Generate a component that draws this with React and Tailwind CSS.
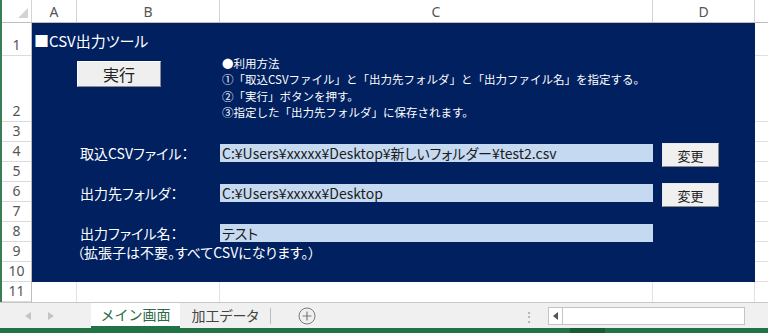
const jp = "font-['Noto_Sans_CJK_JP',sans-serif]"

const cols = [
  { name: 'A', w: 'w-[45px]' },
  { name: 'B', w: 'w-[143px]' },
  { name: 'C', w: 'w-[433px]' },
  { name: 'D', w: 'w-[102px]' },
]

const rowHeights = ['h-[33px]', 'h-[66px]', 'h-[20px]', 'h-[20px]', 'h-[20px]', 'h-[20px]', 'h-[20px]', 'h-[20px]', 'h-[20px]', 'h-[20px]', 'h-[20px]']

function PathRow({ label, value, button }) {
  return (
    <div className="h-[20px] flex items-start">
      <div className="w-[188px] pl-[48px] pt-[3px] text-[14px] leading-[17px] text-white [font-feature-settings:'palt']">{label}</div>
      <div className="w-[433px] h-[18px] mt-[2px] bg-[#c5d9f1] px-[2px] text-[14px] leading-[19px] text-[#1c1c1c] [font-feature-settings:'palt'] whitespace-nowrap overflow-hidden">
        {value}
      </div>
      {button && (
        <button className="ml-[9px] mt-[1px] w-[57px] h-[24px] shrink-0 bg-[#f0f0f0] border border-[#e8e8e8] border-r-[#8a8a8a] border-b-[#8a8a8a] text-[13px] text-[#222] leading-none">
          変更
        </button>
      )}
    </div>
  )
}

export default function App() {
  return (
    <div className={`w-[768px] h-[333px] bg-white flex flex-col overflow-hidden ${jp}`}>
      <div className="h-[302px] flex flex-col border-l-2 border-[#3a7d54]">
        {/* column headers */}
        <div className="h-[23px] flex border-b border-[#bdbdbd] shrink-0">
          <div className="w-[30px] border-r border-[#d4d4d4] flex items-end justify-end pr-[3px] pb-[4px]">
            <svg width="10" height="10" viewBox="0 0 10 10"><polygon points="10,0 10,10 0,10" fill="#d3d3d3" /></svg>
          </div>
          {cols.map((c) => (
            <div key={c.name} className={`${c.w} border-r border-[#d4d4d4] flex items-center justify-center text-[14px] text-[#555] font-['Noto_Sans',sans-serif]`}>
              {c.name}
            </div>
          ))}
          <div className="flex-1" />
        </div>

        <div className="flex-1 flex">
          {/* row headers */}
          <div className="w-[30px] flex flex-col border-r border-[#bdbdbd]">
            {rowHeights.map((h, i) => (
              <div key={i} className={`${h} border-b border-[#dadada] flex items-end justify-center pb-[1px] text-[14px] leading-[18px] text-[#555] font-['Noto_Sans',sans-serif]`}>
                {i + 1}
              </div>
            ))}
          </div>

          <div className="flex-1 flex flex-col">
            <div className="flex h-[259px]">
              <div className="w-[723px] bg-[#002060] flex flex-col text-white">
                <div className="h-[33px] flex items-center pl-[2px] pt-[4px] text-[15px] [font-feature-settings:'palt']">■CSV出力ツール</div>

                <div className="h-[66px] flex">
                  <div className="w-[188px] pl-[45px] pt-[5px]">
                    <button className="w-[84px] h-[26px] bg-[#efefef] border border-[#fafafa] border-r-[#8c8c8c] border-b-[#8c8c8c] text-[16px] text-[#222] leading-none">
                      実行
                    </button>
                  </div>
                  <div className="-mt-[1px] pl-[2px] text-[11.5px] leading-[16.4px] whitespace-nowrap">
                    <p>●利用方法</p>
                    <p>①「取込CSVファイル」と「出力先フォルダ」と「出力ファイル名」を指定する。</p>
                    <p>②「実行」ボタンを押す。</p>
                    <p>③指定した「出力先フォルダ」に保存されます。</p>
                  </div>
                </div>

                <div className="h-[20px]" />
                <PathRow label="取込CSVファイル：" value="C:¥Users¥xxxxx¥Desktop¥新しいフォルダー¥test2.csv" button />
                <div className="h-[20px]" />
                <PathRow label="出力先フォルダ：" value="C:¥Users¥xxxxx¥Desktop" button />
                <div className="h-[20px]" />
                <PathRow label="出力ファイル名：" value="テスト" />
                <div className="h-[20px] pl-[45px] text-[14px] leading-[20px] [font-feature-settings:'palt']">（拡張子は不要。すべてCSVになります。）</div>
                <div className="h-[20px]" />
              </div>

              <div className="flex-1 flex flex-col">
                {rowHeights.slice(0, 10).map((h, i) => (
                  <div key={i} className={`${h} border-b border-[#e1e1e1]`} />
                ))}
              </div>
            </div>

            {/* row 11 */}
            <div className="h-[20px] flex">
              {cols.map((c) => (
                <div key={c.name} className={`${c.w} border-r border-[#e1e1e1]`} />
              ))}
              <div className="flex-1" />
            </div>
          </div>
        </div>
      </div>

      {/* sheet tabs */}
      <div className="h-[26px] flex items-stretch bg-[#f0f0f0] border-t border-[#c8c8c8] shrink-0">
        <div className="w-[91px] flex items-center pl-[25px] gap-[17px]">
          <svg width="6" height="8" viewBox="0 0 6 8"><polygon points="6,0 6,8 0,4" fill="#c4c4c4" /></svg>
          <svg width="6" height="8" viewBox="0 0 6 8"><polygon points="0,0 0,8 6,4" fill="#c4c4c4" /></svg>
        </div>
        <div className="w-[89px] bg-white border-b-2 border-[#217346] flex items-center justify-center text-[14px] text-[#2b6a45]">
          メイン画面
        </div>
        <div className="w-[90px] flex items-center justify-center text-[14px] text-[#444] [font-feature-settings:'palt']">
          加工データ
        </div>
        <div className="flex items-center">
          <div className="w-px h-[16px] bg-[#bdbdbd]" />
        </div>
        <div className="w-[72px] flex items-center justify-center">
          <svg width="18" height="18" viewBox="0 0 18 18">
            <circle cx="9" cy="9" r="8" fill="none" stroke="#7a7a7a" strokeWidth="1" />
            <path d="M9 4.5v9M4.5 9h9" stroke="#7a7a7a" strokeWidth="1.2" />
          </svg>
        </div>
        <div className="flex-1" />
        <div className="w-[15px] flex items-center justify-center text-[#9a9a9a] text-[12px] leading-none">⋮</div>
        <div className="w-[12px]" />
        <div className="flex items-center">
          <div className="w-[197px] h-[18px] flex border border-[#c4c4c4] bg-white">
            <div className="w-[14px] border-r border-[#c4c4c4] flex items-center justify-center">
              <svg width="5" height="8" viewBox="0 0 5 8"><polygon points="5,0 5,8 0,4" fill="#555" /></svg>
            </div>
            <div className="flex-1" />
          </div>
        </div>
        <div className="w-[23px]" />
      </div>

      {/* status bar */}
      <div className="h-[5px] bg-[#217346] flex shrink-0">
        <div className="w-[570px]" />
        <div className="w-[35px] bg-[#185c36]" />
      </div>
    </div>
  )
}
